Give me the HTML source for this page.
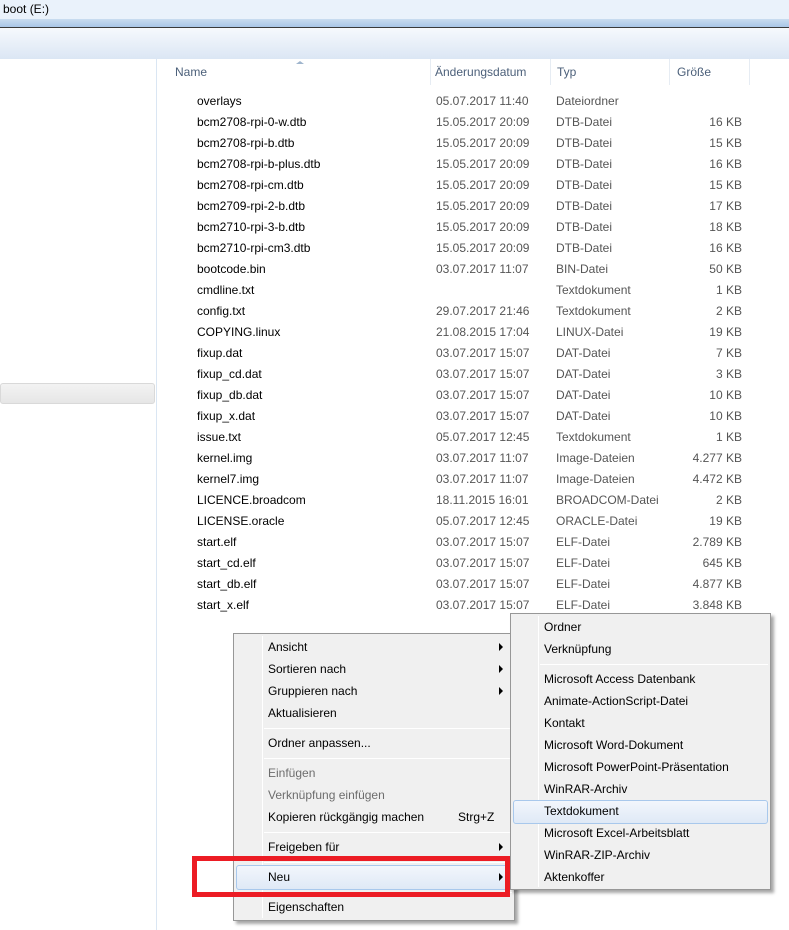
<!DOCTYPE html>
<html><head><meta charset="utf-8"><style>
*{margin:0;padding:0;box-sizing:border-box}
body{width:789px;height:930px;position:relative;overflow:hidden;background:#fff;font-family:"Liberation Sans",sans-serif;font-size:12px;color:#000}
.abs{position:absolute}
.t{position:absolute;white-space:nowrap}
.mi{position:absolute;left:34px;height:22px;line-height:22px;white-space:nowrap}
.si{position:absolute;left:33px;height:22px;line-height:22px;white-space:nowrap}
.arr{position:absolute;width:0;height:0;border-left:4px solid #000;border-top:4px solid transparent;border-bottom:4px solid transparent}
.sep{position:absolute;height:1px;background:#d7d7d7;border-bottom:1px solid #fff}
</style></head><body>
<div class="abs" style="left:0;top:0;width:789px;height:19px;background:#eaf2fb"></div>
<div class="t" style="left:3px;top:2px;font-size:12px">boot (E:)</div>
<div class="abs" style="left:0;top:19px;width:789px;height:8px;background:linear-gradient(#c9dcf0,#a9c6e7)"></div>
<div class="abs" style="left:0;top:27px;width:789px;height:1px;background:#3a3a3a"></div>
<div class="abs" style="left:0;top:28px;width:789px;height:31px;background:linear-gradient(#f6f9fd,#dbe6f4)"></div>
<div class="abs" style="left:156px;top:59px;width:1px;height:871px;background:#dae6f3"></div>
<div class="abs" style="left:0;top:383px;width:155px;height:21px;background:linear-gradient(#f3f3f3,#e6e6e6);border:1px solid #d9d9d9;border-radius:3px"></div>
<div class="abs" style="left:430px;top:59px;width:1px;height:26px;background:#e6ecf3"></div>
<div class="abs" style="left:550px;top:59px;width:1px;height:26px;background:#e6ecf3"></div>
<div class="abs" style="left:669px;top:59px;width:1px;height:26px;background:#e6ecf3"></div>
<div class="abs" style="left:749px;top:59px;width:1px;height:26px;background:#e6ecf3"></div>
<div class="abs" style="left:296px;top:61px;width:0;height:0;border-left:4px solid transparent;border-right:4px solid transparent;border-bottom:3px solid #9fb5cd"></div>
<div class="t" style="left:175px;top:65px;color:#4c607a">Name</div>
<div class="t" style="left:435px;top:65px;color:#4c607a">Änderungsdatum</div>
<div class="t" style="left:557px;top:65px;color:#4c607a">Typ</div>
<div class="t" style="left:677px;top:65px;color:#4c607a">Größe</div>
<div id="rows"></div>
<script>
var d=[["overlays","05.07.2017 11:40","Dateiordner",""],
["bcm2708-rpi-0-w.dtb","15.05.2017 20:09","DTB-Datei","16 KB"],
["bcm2708-rpi-b.dtb","15.05.2017 20:09","DTB-Datei","15 KB"],
["bcm2708-rpi-b-plus.dtb","15.05.2017 20:09","DTB-Datei","16 KB"],
["bcm2708-rpi-cm.dtb","15.05.2017 20:09","DTB-Datei","15 KB"],
["bcm2709-rpi-2-b.dtb","15.05.2017 20:09","DTB-Datei","17 KB"],
["bcm2710-rpi-3-b.dtb","15.05.2017 20:09","DTB-Datei","18 KB"],
["bcm2710-rpi-cm3.dtb","15.05.2017 20:09","DTB-Datei","16 KB"],
["bootcode.bin","03.07.2017 11:07","BIN-Datei","50 KB"],
["cmdline.txt","","Textdokument","1 KB"],
["config.txt","29.07.2017 21:46","Textdokument","2 KB"],
["COPYING.linux","21.08.2015 17:04","LINUX-Datei","19 KB"],
["fixup.dat","03.07.2017 15:07","DAT-Datei","7 KB"],
["fixup_cd.dat","03.07.2017 15:07","DAT-Datei","3 KB"],
["fixup_db.dat","03.07.2017 15:07","DAT-Datei","10 KB"],
["fixup_x.dat","03.07.2017 15:07","DAT-Datei","10 KB"],
["issue.txt","05.07.2017 12:45","Textdokument","1 KB"],
["kernel.img","03.07.2017 11:07","Image-Dateien","4.277 KB"],
["kernel7.img","03.07.2017 11:07","Image-Dateien","4.472 KB"],
["LICENCE.broadcom","18.11.2015 16:01","BROADCOM-Datei","2 KB"],
["LICENSE.oracle","05.07.2017 12:45","ORACLE-Datei","19 KB"],
["start.elf","03.07.2017 15:07","ELF-Datei","2.789 KB"],
["start_cd.elf","03.07.2017 15:07","ELF-Datei","645 KB"],
["start_db.elf","03.07.2017 15:07","ELF-Datei","4.877 KB"],
["start_x.elf","03.07.2017 15:07","ELF-Datei","3.848 KB"]];
var h="";
d.forEach(function(r,i){var y=91+i*21;
h+='<div class="t" style="left:197px;top:'+(y+3)+'px">'+r[0]+'</div>';
h+='<div class="t" style="left:436px;top:'+(y+3)+'px;color:#555">'+r[1]+'</div>';
h+='<div class="t" style="left:556px;top:'+(y+3)+'px;color:#555">'+r[2]+'</div>';
h+='<div class="t" style="right:47px;top:'+(y+3)+'px;color:#555">'+r[3]+'</div>';});
document.getElementById("rows").innerHTML=h;
</script>

<div class="abs" style="left:233px;top:633px;width:282px;height:288px;background:#f0f0f0;border:1px solid #979797;box-shadow:3px 3px 3px rgba(0,0,0,.35)">
<div class="abs" style="left:28px;top:2px;width:1px;height:282px;background:#e2e3e3;border-right:1px solid #fff"></div>
<div class="mi" style="top:2px">Ansicht</div><div class="arr" style="left:265px;top:9px"></div>
<div class="mi" style="top:24px">Sortieren nach</div><div class="arr" style="left:265px;top:31px"></div>
<div class="mi" style="top:46px">Gruppieren nach</div><div class="arr" style="left:265px;top:53px"></div>
<div class="mi" style="top:68px">Aktualisieren</div>
<div class="sep" style="left:30px;top:94px;width:248px"></div>
<div class="mi" style="top:98px">Ordner anpassen...</div>
<div class="sep" style="left:30px;top:124px;width:248px"></div>
<div class="mi" style="top:128px;color:#6d6d6d">Einfügen</div>
<div class="mi" style="top:150px;color:#6d6d6d">Verknüpfung einfügen</div>
<div class="mi" style="top:172px">Kopieren rückgängig machen</div>
<div class="t" style="left:224px;top:176px">Strg+Z</div>
<div class="sep" style="left:30px;top:198px;width:248px"></div>
<div class="mi" style="top:202px">Freigeben für</div><div class="arr" style="left:265px;top:209px"></div>
<div class="sep" style="left:30px;top:228px;width:248px"></div>
<div class="abs" style="left:2px;top:231px;width:273px;height:25px;border:1px solid #a8c8ec;border-radius:3px;background:linear-gradient(#f2f6fc,#dfe9f6)"></div>
<div class="mi" style="top:232px">Neu</div><div class="arr" style="left:265px;top:239px"></div>
<div class="sep" style="left:30px;top:258px;width:248px"></div>
<div class="mi" style="top:262px">Eigenschaften</div>
</div>
<div class="abs" style="left:192px;top:856px;width:318px;height:41px;border:5px solid #ec1c24"></div>
<div class="abs" style="left:510px;top:613px;width:261px;height:277px;background:#f0f0f0;border:1px solid #979797;box-shadow:3px 3px 3px rgba(0,0,0,.35)">
<div class="abs" style="left:27px;top:2px;width:1px;height:271px;background:#e2e3e3;border-right:1px solid #fff"></div>
<div class="si" style="top:2px">Ordner</div>
<div class="si" style="top:24px">Verknüpfung</div>
<div class="sep" style="left:29px;top:50px;width:228px"></div>
<div class="si" style="top:54px">Microsoft Access Datenbank</div>
<div class="si" style="top:76px">Animate-ActionScript-Datei</div>
<div class="si" style="top:98px">Kontakt</div>
<div class="si" style="top:120px">Microsoft Word-Dokument</div>
<div class="si" style="top:142px">Microsoft PowerPoint-Präsentation</div>
<div class="si" style="top:164px">WinRAR-Archiv</div>
<div class="abs" style="left:2px;top:186px;width:255px;height:24px;border:1px solid #a8c8ec;border-radius:3px;background:linear-gradient(#f2f6fc,#dfe9f6)"></div>
<div class="si" style="top:186px">Textdokument</div>
<div class="si" style="top:208px">Microsoft Excel-Arbeitsblatt</div>
<div class="si" style="top:230px">WinRAR-ZIP-Archiv</div>
<div class="si" style="top:252px">Aktenkoffer</div>
</div>
</body></html>
